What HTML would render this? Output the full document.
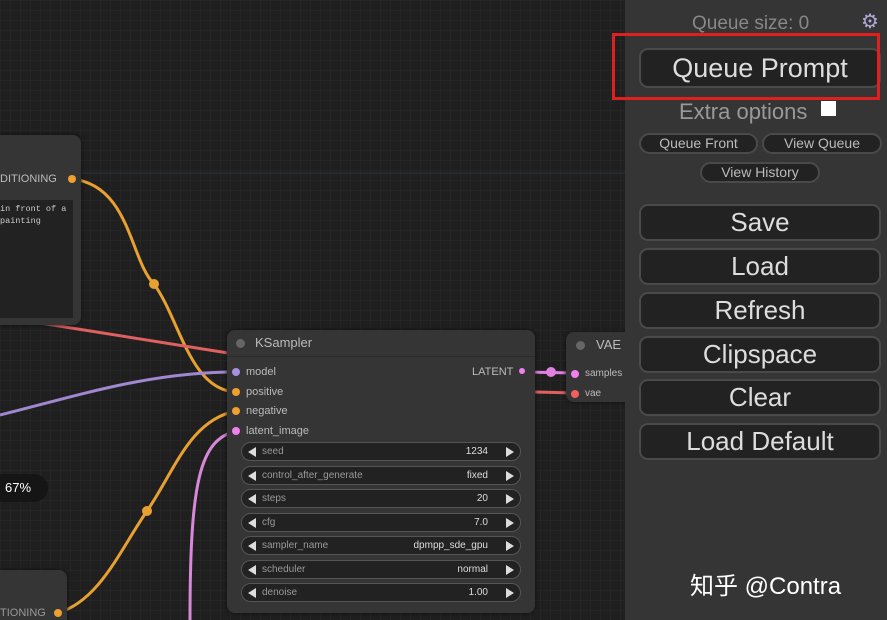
<!DOCTYPE html>
<html><head><meta charset="utf-8"><style>
*{margin:0;padding:0;box-sizing:border-box}
html,body{width:887px;height:620px;overflow:hidden}
body{background:#1f1f1f;font-family:"Liberation Sans",sans-serif;position:relative;
background-image:linear-gradient(#252525 1px,transparent 1px),linear-gradient(90deg,#252525 1px,transparent 1px);background-size:10px 10px}
.abs{position:absolute}
.node{position:absolute;background:#353535;border-radius:8px;box-shadow:0 0 4px #111}
.t{position:absolute;font-size:11px;color:#bbb}
.dot{position:absolute;width:8px;height:8px;border-radius:50%}
.w{position:absolute;left:14px;width:280px;height:19px;background:#222;border:1px solid #555;border-radius:10px;font-size:10px;color:#999;line-height:18px}
.w .l{position:absolute;left:20px}.w .v{position:absolute;right:32px;color:#ddd}
.w:before{content:"";position:absolute;left:6px;top:4px;border-right:8px solid #ddd;border-top:5px solid transparent;border-bottom:5px solid transparent}
.w:after{content:"";position:absolute;right:6px;top:4px;border-left:8px solid #ddd;border-top:5px solid transparent;border-bottom:5px solid transparent}
.panel{position:absolute;left:625px;top:0;width:262px;height:620px;background:#353535}
.b{position:absolute;background:#222;border:2px solid #4a4a4a;border-radius:9px;color:#ddd;text-align:center}
.big{left:14px;width:242px;height:37px;font-size:26px;line-height:33px}
.sm{height:21px;font-size:14px;line-height:17px;color:#bbb;border-radius:11px}
</style></head><body>
<svg class="abs" style="left:0;top:0" width="887" height="620">
<line x1="81" y1="173" x2="625" y2="173" stroke="#2a3344" stroke-width="1"/>
<path d="M72 179 C130 185 130 260 154 284 C180 320 190 390 236 392" stroke="#e8a030" stroke-width="3" fill="none"/>
<circle cx="154" cy="284" r="5" fill="#e8a030"/>
<path d="M40 323 L228 353" stroke="#e06060" stroke-width="3" fill="none"/>
<path d="M0 415 C80 395 150 372 236 372" stroke="#a088d0" stroke-width="3" fill="none"/>
<path d="M58 613 C100 600 120 550 147 511 C175 470 190 420 236 411" stroke="#e8a030" stroke-width="3" fill="none"/>
<circle cx="147" cy="511" r="5" fill="#e8a030"/>
<path d="M236 431 C200 440 190 480 190 620" stroke="#d888d8" stroke-width="3" fill="none"/>
<path d="M523 372 L575 373" stroke="#e080e0" stroke-width="3"/>
<circle cx="551" cy="372" r="5" fill="#e080e0"/>
<path d="M535 392 L575 393" stroke="#e06060" stroke-width="3"/>
</svg>
<div class="node" style="left:-10px;top:135px;width:91px;height:190px">
<div class="t" style="left:10px;top:38px">DITIONING</div>
<div class="dot" style="left:78px;top:40px;background:#f0a030"></div>
<div class="abs" style="left:10px;top:65px;width:73px;height:118px;background:#222;font-family:'Liberation Mono',monospace;font-size:8.5px;color:#ccc;padding:3px 0;line-height:12px;white-space:nowrap;overflow:hidden">in front of a<br>painting</div>
</div>
<div class="node" style="left:-10px;top:570px;width:77px;height:60px">
<div class="t" style="left:10px;top:37px;color:#999">TIONING</div>
<div class="dot" style="left:64px;top:39px;background:#f0a030"></div>
</div>
<div class="abs" style="left:-20px;top:474px;width:68px;height:28px;background:#151515;border-radius:14px;color:#fff;font-size:13px;line-height:28px;padding-left:25px">67%</div>
<div class="node" style="left:227px;top:330px;width:308px;height:283px">
<div class="abs" style="left:0;top:0;width:308px;height:27px;border-bottom:1px solid #2a2a2a"></div>
<div class="dot" style="left:9px;top:9px;background:#666;width:9px;height:9px"></div>
<div class="t" style="left:28px;top:5px;font-size:13px;color:#bbb">KSampler</div>
<div class="dot" style="left:5px;top:38px;background:#a890e0"></div><div class="t" style="left:19px;top:36px">model</div>
<div class="dot" style="left:5px;top:58px;background:#f0a030"></div><div class="t" style="left:19px;top:56px">positive</div>
<div class="dot" style="left:5px;top:77px;background:#f0a030"></div><div class="t" style="left:19px;top:75px">negative</div>
<div class="dot" style="left:5px;top:97px;background:#f080f0"></div><div class="t" style="left:19px;top:95px">latent_image</div>
<div class="t" style="left:245px;top:36px">LATENT</div><div class="dot" style="left:292px;top:38px;background:#f080f0;width:6px;height:6px"></div>
<div class="w" style="top:112px"><span class="l">seed</span><span class="v">1234</span></div>
<div class="w" style="top:136px"><span class="l">control_after_generate</span><span class="v">fixed</span></div>
<div class="w" style="top:159px"><span class="l">steps</span><span class="v">20</span></div>
<div class="w" style="top:183px"><span class="l">cfg</span><span class="v">7.0</span></div>
<div class="w" style="top:206px"><span class="l">sampler_name</span><span class="v">dpmpp_sde_gpu</span></div>
<div class="w" style="top:230px"><span class="l">scheduler</span><span class="v">normal</span></div>
<div class="w" style="top:253px"><span class="l">denoise</span><span class="v">1.00</span></div>
</div>
<div class="node" style="left:566px;top:332px;width:80px;height:70px">
<div class="dot" style="left:10px;top:9px;background:#666;width:9px;height:9px"></div>
<div class="t" style="left:30px;top:5px;font-size:13px">VAE</div>
<div class="dot" style="left:5px;top:38px;background:#f080f0"></div><div class="t" style="left:19px;top:36px;font-size:10px">samples</div>
<div class="dot" style="left:5px;top:58px;background:#f06060"></div><div class="t" style="left:19px;top:56px;font-size:10px">vae</div>
</div>
<div class="panel">
<div class="abs" style="left:67px;top:13px;font-size:19px;color:#888">Queue size: 0</div>
<div class="abs" style="left:236px;top:9px;font-size:20px;color:#b0a8d8">⚙</div>
<div class="b" style="left:14px;top:48px;width:242px;height:40px;font-size:27px;line-height:36px">Queue Prompt</div>
<div class="abs" style="left:-13px;top:33px;width:268px;height:67px;border:3px solid #e02020"></div>
<div class="abs" style="left:54px;top:99px;font-size:22px;color:#999">Extra options</div>
<div class="abs" style="left:196px;top:101px;width:15px;height:15px;background:#fff"></div>
<div class="b sm" style="left:14px;top:133px;width:119px">Queue Front</div>
<div class="b sm" style="left:137px;top:133px;width:120px">View Queue</div>
<div class="b sm" style="left:75px;top:162px;width:120px">View History</div>
<div class="b big" style="top:204px">Save</div>
<div class="b big" style="top:248px">Load</div>
<div class="b big" style="top:292px">Refresh</div>
<div class="b big" style="top:336px">Clipspace</div>
<div class="b big" style="top:379px">Clear</div>
<div class="b big" style="top:423px">Load Default</div>
</div>
<div class="abs" style="left:690px;top:566px;font-size:24px;color:#fff;font-family:'Liberation Sans','Noto Sans CJK SC',sans-serif">知乎 @Contra</div>
</body></html>
